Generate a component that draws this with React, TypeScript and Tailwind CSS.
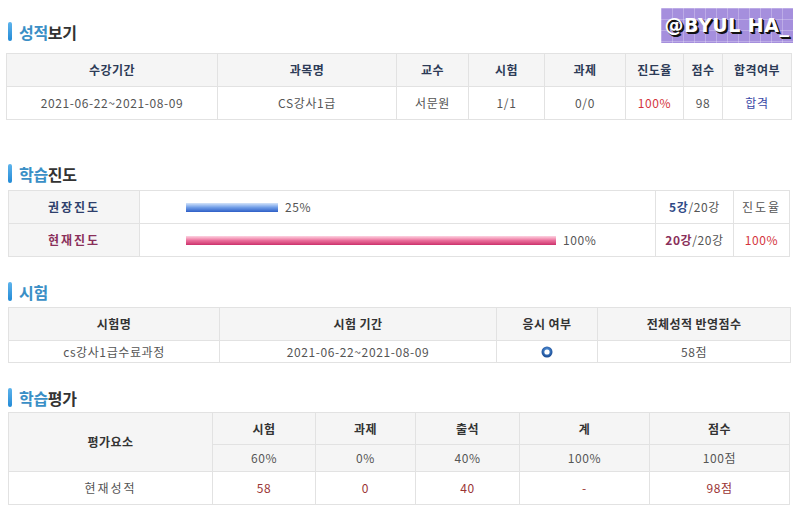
const font = { fontFamily: '"Noto Sans CJK KR", "Noto Sans", sans-serif' };

function Title({ blue, rest }: { blue: string; rest?: string }) {
  return (
    <div className="flex h-[19px] items-center gap-[7px] pl-[8px]">
      <span className="h-[19px] w-[4px] rounded-full bg-gradient-to-b from-[#5db4ec] to-[#1f8ad6]" />
      <h2 className="text-[16px] font-bold leading-none tracking-[-0.3px]">
        <span className="text-[#3a8fc6]">{blue}</span>
        {rest && <span className="text-[#333]">{rest}</span>}
      </h2>
    </div>
  );
}

const th = "border border-[#e2e2e2] bg-[#f5f5f5] text-center text-[12px] font-bold tracking-[0.4px] text-[#2d3b57]";
const td = "border border-[#e2e2e2] text-center text-[12px] tracking-[0.6px] text-[#555]";

function Ring() {
  return (
    <svg width="12" height="12" viewBox="0 0 12 12" className="mx-auto block">
      <defs>
        <radialGradient id="rg" cx="50%" cy="40%" r="60%">
          <stop offset="0%" stopColor="#5fa0e6" />
          <stop offset="100%" stopColor="#15468f" />
        </radialGradient>
      </defs>
      <circle cx="6" cy="6" r="5.5" fill="url(#rg)" />
      <circle cx="6" cy="6" r="2.6" fill="#fff" />
    </svg>
  );
}

export default function App() {
  return (
    <div className="relative h-[508px] w-[800px] overflow-hidden bg-white" style={font}>
      <div className="absolute left-[661px] top-[8px] flex h-[35px] w-[132px] items-center justify-center bg-[#a58fdd] bg-[linear-gradient(rgba(255,255,255,0.25)_1px,transparent_1px),linear-gradient(90deg,rgba(255,255,255,0.25)_1px,transparent_1px)] bg-[size:11px_11px]">
        <span
          className="text-[19px] font-bold tracking-[0.5px] text-white [text-shadow:1px_1px_0_#111,2px_2px_0_#111]"
          style={{ fontFamily: '"DejaVu Sans", sans-serif' }}
        >
          @BYUL HA_
        </span>
      </div>

      <div className="pt-[22px]">
        <Title blue="성적" rest="보기" />
        <table className="ml-[6px] mt-[12px] w-[785px] table-fixed border-collapse">
          <colgroup>
            <col className="w-[211px]" />
            <col className="w-[179px]" />
            <col className="w-[72px]" />
            <col className="w-[76px]" />
            <col className="w-[81px]" />
            <col className="w-[58px]" />
            <col className="w-[39px]" />
            <col className="w-[69px]" />
          </colgroup>
          <thead>
            <tr className="h-[33px]">
              <th className={th}>수강기간</th>
              <th className={th}>과목명</th>
              <th className={th}>교수</th>
              <th className={th}>시험</th>
              <th className={th}>과제</th>
              <th className={th}>진도율</th>
              <th className={th}>점수</th>
              <th className={th}>합격여부</th>
            </tr>
          </thead>
          <tbody>
            <tr className="h-[33px]">
              <td className={td}>2021-06-22~2021-08-09</td>
              <td className={td}>CS강사1급</td>
              <td className={td}>서문원</td>
              <td className={td}>1/1</td>
              <td className={td}>0/0</td>
              <td className={`${td} !text-[#d4343c]`}>100%</td>
              <td className={td}>98</td>
              <td className={`${td} !text-[#3a48a6]`}>합격</td>
            </tr>
          </tbody>
        </table>

        <div className="mt-[44px]">
          <Title blue="학습" rest="진도" />
        </div>
        <table className="ml-[8px] mt-[7px] w-[781px] table-fixed border-collapse">
          <colgroup>
            <col className="w-[131px]" />
            <col className="w-[516px]" />
            <col className="w-[78px]" />
            <col className="w-[56px]" />
          </colgroup>
          <tbody>
            <tr className="h-[33px]">
              <td className={`${th} !tracking-[2px] !text-[#2e3f6c]`}>권장진도</td>
              <td className={`${td} !text-left`}>
                <div className="flex items-center gap-[7px] pl-[46px]">
                  <div className="h-[9px] w-[92px] bg-gradient-to-b from-[#d4e4fa] via-[#6f9ce6] to-[#2e5ec6]" />
                  <span>25%</span>
                </div>
              </td>
              <td className={td}>
                <span className="font-bold text-[#2f4a86]">5강</span>/20강
              </td>
              <td className={`${td} !tracking-[2px]`}>진도율</td>
            </tr>
            <tr className="h-[33px]">
              <td className={`${th} !tracking-[2px] !text-[#8a2f5a]`}>현재진도</td>
              <td className={`${td} !text-left`}>
                <div className="flex items-center gap-[7px] pl-[46px]">
                  <div className="h-[9px] w-[370px] bg-gradient-to-b from-[#fbd3e2] via-[#ea6e9c] to-[#cc2f6c]" />
                  <span>100%</span>
                </div>
              </td>
              <td className={td}>
                <span className="font-bold text-[#8a2f5a]">20강</span>/20강
              </td>
              <td className={`${td} !text-[#d4343c]`}>100%</td>
            </tr>
          </tbody>
        </table>

        <div className="mt-[25px]">
          <Title blue="시험" />
        </div>
        <table className="ml-[8px] mt-[6px] w-[782px] table-fixed border-collapse">
          <colgroup>
            <col className="w-[211px]" />
            <col className="w-[277px]" />
            <col className="w-[101px]" />
            <col className="w-[193px]" />
          </colgroup>
          <thead>
            <tr className="h-[33px]">
              <th className={`${th} !text-[#333]`}>시험명</th>
              <th className={`${th} !text-[#333]`}>시험 기간</th>
              <th className={`${th} !text-[#333]`}>응시 여부</th>
              <th className={`${th} !text-[#333]`}>전체성적 반영점수</th>
            </tr>
          </thead>
          <tbody>
            <tr className="h-[22px]">
              <td className={td}>cs강사1급수료과정</td>
              <td className={td}>2021-06-22~2021-08-09</td>
              <td className={td}>
                <Ring />
              </td>
              <td className={td}>58점</td>
            </tr>
          </tbody>
        </table>

        <div className="mt-[25px]">
          <Title blue="학습" rest="평가" />
        </div>
        <table className="ml-[8px] mt-[5px] w-[781px] table-fixed border-collapse">
          <colgroup>
            <col className="w-[204px]" />
            <col className="w-[103px]" />
            <col className="w-[100px]" />
            <col className="w-[104px]" />
            <col className="w-[130px]" />
            <col className="w-[140px]" />
          </colgroup>
          <thead>
            <tr className="h-[32px]">
              <th rowSpan={2} className={`${th} !text-[#333]`}>평가요소</th>
              <th className={`${th} !text-[#333]`}>시험</th>
              <th className={`${th} !text-[#333]`}>과제</th>
              <th className={`${th} !text-[#333]`}>출석</th>
              <th className={`${th} !text-[#333]`}>계</th>
              <th className={`${th} !text-[#333]`}>점수</th>
            </tr>
            <tr className="h-[27px]">
              <td className={`${td} bg-[#f5f5f5]`}>60%</td>
              <td className={`${td} bg-[#f5f5f5]`}>0%</td>
              <td className={`${td} bg-[#f5f5f5]`}>40%</td>
              <td className={`${td} bg-[#f5f5f5]`}>100%</td>
              <td className={`${td} bg-[#f5f5f5]`}>100점</td>
            </tr>
          </thead>
          <tbody>
            <tr className="h-[33px]">
              <td className={`${td} !tracking-[2px]`}>현재성적</td>
              <td className={`${td} !text-[#9a3434]`}>58</td>
              <td className={`${td} !text-[#9a3434]`}>0</td>
              <td className={`${td} !text-[#9a3434]`}>40</td>
              <td className={`${td} !text-[#9a3434]`}>-</td>
              <td className={`${td} !text-[#9a3434]`}>98점</td>
            </tr>
          </tbody>
        </table>
      </div>
    </div>
  );
}
